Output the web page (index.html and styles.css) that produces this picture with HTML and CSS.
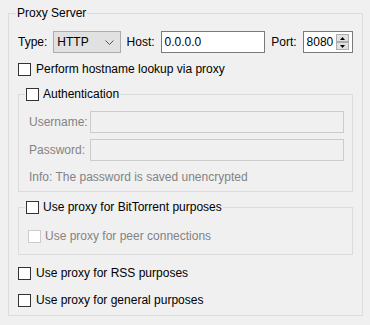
FILE: index.html
```html
<!DOCTYPE html>
<html lang="en">
<head>
  <meta charset="UTF-8" />
  <title>Proxy Server</title>
  <link rel="stylesheet" href="styles.css">
</head>
<body>

  <fieldset class="group outer">
    <legend>Proxy Server</legend>

    <div class="row server">
      <span class="lbl">Type:</span>
      <div class="combo">
        <span>HTTP</span>
        <svg width="9" height="5" viewBox="0 0 9 5"><path d="M0.5 0.5 L4.5 4.5 L8.5 0.5" fill="none" stroke="#555" stroke-width="1"/></svg>
      </div>
      <span class="lbl host">Host:</span>
      <div class="edit hostbox">0.0.0.0</div>
      <span class="lbl port">Port:</span>
      <div class="edit spin">
        <span>8080</span>
        <div class="arrows">
          <div class="arrow"><svg width="5" height="3" viewBox="0 0 5 3"><path d="M2.5 0 L5 3 L0 3 Z" fill="#000"/></svg></div>
          <div class="arrow"><svg width="5" height="3" viewBox="0 0 5 3"><path d="M0 0 L5 0 L2.5 3 Z" fill="#000"/></svg></div>
        </div>
      </div>
    </div>

    <label class="check lookup"><span class="box"></span>Perform hostname lookup via proxy</label>

    <fieldset class="group inner auth">
      <legend><label class="check"><span class="box"></span>Authentication</label></legend>
      <div class="row cred">
        <span class="lbl dim">Username:</span>
        <div class="edit off"></div>
      </div>
      <div class="row cred">
        <span class="lbl dim">Password:</span>
        <div class="edit off"></div>
      </div>
      <div class="info dim">Info: The password is saved unencrypted</div>
    </fieldset>

    <fieldset class="group inner bt">
      <legend><label class="check"><span class="box"></span>Use proxy for BitTorrent purposes</label></legend>
      <label class="check dim peer"><span class="box off"></span>Use proxy for peer connections</label>
    </fieldset>

    <label class="check rss"><span class="box"></span>Use proxy for RSS purposes</label>
    <label class="check general"><span class="box"></span>Use proxy for general purposes</label>
  </fieldset>

</body>
</html>
```

FILE: styles.css
```css
body {
  margin: 0;
  background-color: #f0f0f0;
  font-family: "Liberation Sans", Arial, sans-serif;
  font-size: 12px;
  color: #000;
}

.group {
  border: 1px solid #dcdcdc;
  margin: 0;
  min-width: 0;
}

.group legend {
  line-height: 16px;
  height: 16px;
  padding: 0 1px;
}

.outer {
  margin: 5px 0 0 8px;
  width: 355px;
  box-sizing: border-box;
  padding: 0 9px 7px 9px;
}

.outer > legend {
  margin-left: -2px;
}

.row {
  display: flex;
  align-items: center;
}

.server {
  margin-top: 10px;
  height: 22px;
}

.lbl {
  white-space: nowrap;
}

.combo {
  margin-left: 6px;
  width: 68px;
  height: 22px;
  box-sizing: border-box;
  background-color: #e1e1e1;
  border: 1px solid #adadad;
  display: flex;
  align-items: center;
  justify-content: space-between;
  padding: 0 6px 0 3px;
}

.host {
  margin-left: 6px;
}

.edit {
  height: 22px;
  box-sizing: border-box;
  background-color: #fff;
  border: 1px solid #7a7a7a;
  display: flex;
  align-items: center;
  padding: 0 3px;
}

.hostbox {
  margin-left: 6px;
  width: 106px;
}

.port {
  margin-left: 6px;
}

.spin {
  margin-left: 6px;
  width: 51px;
  justify-content: space-between;
  padding: 0 3px 0 3px;
}

.arrows {
  display: flex;
  flex-direction: column;
}

.arrow {
  width: 13px;
  height: 8px;
  box-sizing: border-box;
  background-color: #e1e1e1;
  border: 1px solid #adadad;
  display: flex;
  align-items: center;
  justify-content: center;
}

.check {
  display: flex;
  align-items: center;
  white-space: nowrap;
  height: 16px;
}

.box {
  width: 13px;
  height: 13px;
  box-sizing: border-box;
  border: 1px solid #333;
  background-color: #fff;
  margin-right: 5px;
  flex: none;
}

.inner .check .box {
  margin-right: 4px;
}

.box.off {
  border-color: #cccccc;
}

.dim {
  color: #838383;
}

.lookup {
  margin-top: 8px;
}

.inner {
  width: 335px;
  box-sizing: border-box;
}

.auth {
  margin-top: 9px;
  padding: 9px 8px 6px 10px;
}

.auth > legend {
  margin-left: -4px;
}

.cred {
  justify-content: space-between;
}

.cred + .cred {
  margin-top: 6px;
}

.edit.off {
  width: 254px;
  background-color: #f0f0f0;
  border-color: #cccccc;
}

.info {
  margin-top: 8px;
  line-height: 16px;
}

.bt {
  margin-top: 7px;
  padding: 13px 8px 10px 9px;
}

.bt > legend {
  margin-left: -3px;
}

.rss {
  margin-top: 10px;
}

.general {
  margin-top: 11px;
}
```
